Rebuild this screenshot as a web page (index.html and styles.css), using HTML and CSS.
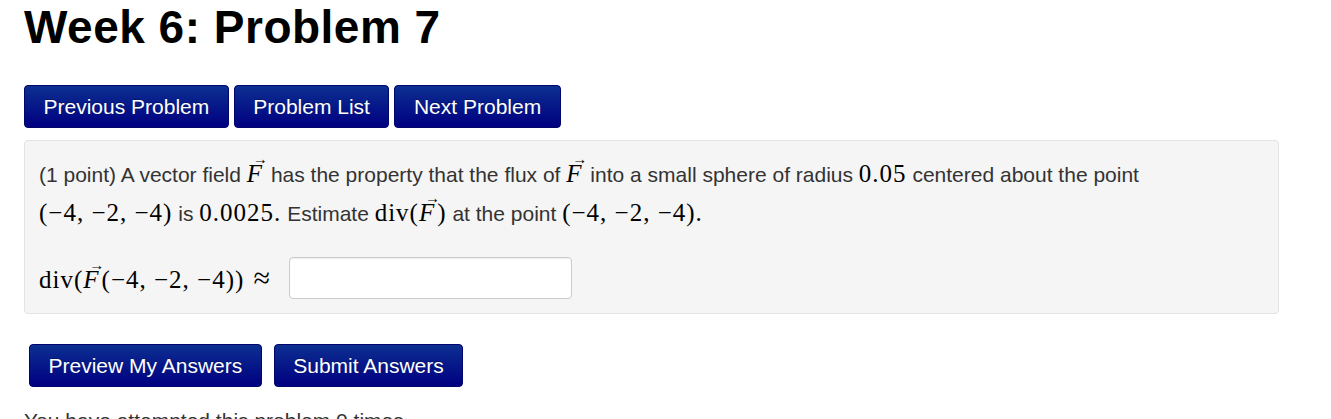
FILE: index.html
```html
<!DOCTYPE html>
<html lang="en">
<head>
    <meta charset="UTF-8">
    <meta name="viewport" content="width=device-width, initial-scale=1.0">
    <title>Week 6: Problem 7</title>
    <link rel="stylesheet" href="styles.css">
</head>
<body>
    <div class="container">
        <h1>Week 6: Problem 7</h1>

        <div class="nav-buttons">
            <a href="#" class="button">Previous Problem</a>
            <a href="#" class="button">Problem List</a>
            <a href="#" class="button">Next Problem</a>
        </div>

        <div class="problem">
            <p class="problem-text">
                (1 point) A vector field <span class="math"><span class="vec">F</span></span> has the property that the flux of
                <span class="math"><span class="vec">F</span></span> into a small sphere of radius <span class="math">0.05</span>
                centered about the point <span class="math">(&minus;4, &minus;2, &minus;4)</span> is <span class="math">0.0025.</span>
                Estimate <span class="math">div(<span class="vec">F</span>)</span> at the point <span class="math">(&minus;4, &minus;2, &minus;4).</span>
            </p>
            <div class="answer-row">
                <label for="answer1" class="math">div(<span class="vec">F</span>(&minus;4, &minus;2, &minus;4)) <span class="rel">&asymp;</span></label>
                <input type="text" id="answer1" class="answer">
            </div>
        </div>

        <div class="submit-buttons">
            <button type="button" class="button">Preview My Answers</button>
            <button type="button" class="button">Submit Answers</button>
        </div>

        <p class="attempts">You have attempted this problem 0 times.</p>
    </div>
</body>
</html>
```

FILE: styles.css
```css
body {
    font-family: "Liberation Sans", Arial, sans-serif;
    font-size: 21px;
    color: #333;
    background-color: #fff;
    margin: 0;
    padding: 0;
}

.container {
    width: 1255px;
    margin-left: 24px;
}

h1 {
    font-size: 46px;
    letter-spacing: 0.5px;
    line-height: 52px;
    color: #000;
    margin: 0;
    padding-top: 1px;
}

.nav-buttons {
    display: flex;
    gap: 5px;
    margin-top: 32px;
}

.button {
    display: inline-block;
    height: 43px;
    line-height: 41px;
    padding: 0 18.5px;
    box-sizing: border-box;
    font-family: "Liberation Sans", Arial, sans-serif;
    font-size: 21px;
    color: #fff;
    text-decoration: none;
    text-shadow: 0 -1px 0 rgba(0, 0, 0, 0.25);
    background-color: #00057f;
    background-image: linear-gradient(to bottom, #0c2f91, #000080);
    border: 1px solid #00066a;
    border-radius: 4px;
    cursor: pointer;
}

.button:hover {
    background-image: none;
}

.problem {
    margin-top: 12px;
    padding: 14px 14px 10px;
    background-color: #f5f5f5;
    border: 1px solid #e3e3e3;
    border-radius: 4px;
}

.problem-text {
    margin: 0 0 20px;
    line-height: 38px;
}

.math {
    font-family: "Liberation Serif", "Times New Roman", serif;
    font-size: 25px;
    letter-spacing: 1px;
    color: #000;
    white-space: nowrap;
}

.vec {
    position: relative;
    font-style: italic;
    padding-right: 2px;
}

/* arrow drawn over the F */
.vec::after {
    content: "\2192";
    position: absolute;
    left: 6px;
    top: -8px;
    line-height: 1;
    font-style: normal;
    font-size: 15px;
}

.rel {
    margin-left: 2px;
    font-size: 30px;
    line-height: 1;
}

.answer-row {
    display: flex;
    align-items: center;
    gap: 18px;
    height: 50px;
}

.answer {
    width: 283px;
    height: 42px;
    box-sizing: border-box;
    padding: 4px 8px;
    font-size: 20px;
    background-color: #fff;
    border: 1px solid #ccc;
    border-radius: 4px;
    box-shadow: inset 0 1px 1px rgba(0, 0, 0, 0.075);
}

.submit-buttons {
    display: flex;
    gap: 12px;
    margin: 30px 0 0 5px;
}

.attempts {
    margin: 22px 0 0;
    line-height: 24px;
}
```
